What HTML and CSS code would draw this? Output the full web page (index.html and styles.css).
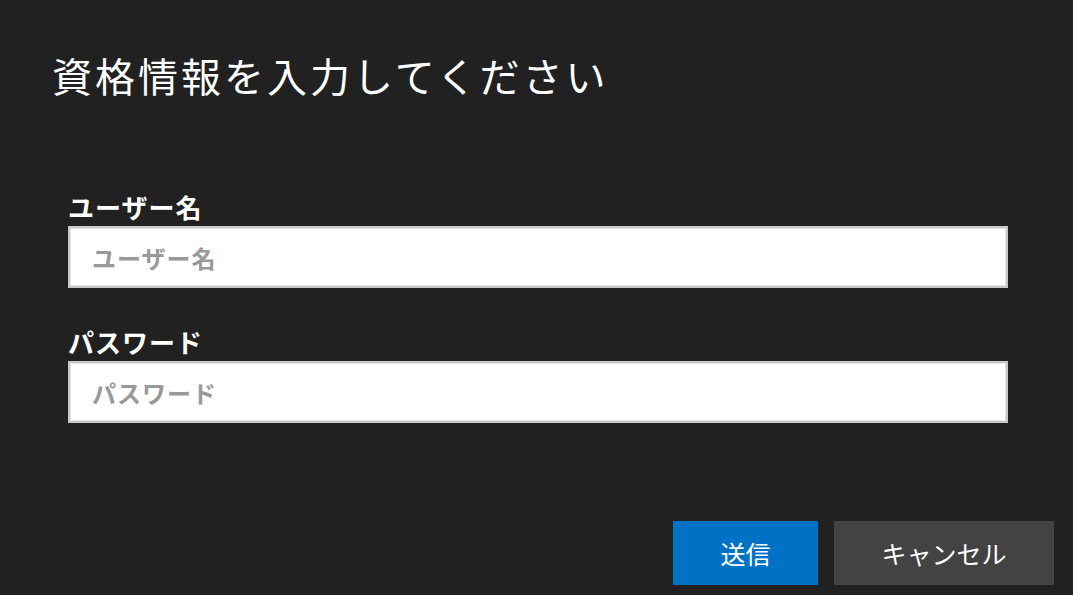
FILE: index.html
```html
<!DOCTYPE html>
<html lang="ja">
<head>
<meta charset="utf-8">
<title>資格情報を入力してください</title>
<link rel="stylesheet" href="styles.css">
</head>
<body>
<div class="dialog">
  <h1 class="title">資格情報を入力してください</h1>
  <form class="form">
    <label class="field">
      <span class="label">ユーザー名</span>
      <input class="input" type="text" placeholder="ユーザー名">
    </label>
    <label class="field field-second">
      <span class="label">パスワード</span>
      <input class="input" type="password" placeholder="パスワード">
    </label>
  </form>
  <div class="actions">
    <button class="btn btn-primary" type="button">送信</button>
    <button class="btn btn-secondary" type="button">キャンセル</button>
  </div>
</div>
</body>
</html>
```
FILE: styles.css
```css
html, body {
  margin: 0;
  padding: 0;
  background: #212121;
  height: 100%;
}
body {
  font-family: "Noto Sans CJK JP", "Noto Sans", sans-serif;
  color: #ffffff;
}
.dialog {
  display: flex;
  flex-direction: column;
  height: 595px;
  box-sizing: border-box;
}
.title {
  margin: 51px 0 0 52px;
  font-size: 40px;
  line-height: 48px;
  font-weight: 400;
  letter-spacing: 3px;
}
.form {
  display: flex;
  flex-direction: column;
  margin: 93px 0 0 68px;
  width: 940px;
}
.field {
  display: flex;
  flex-direction: column;
  gap: 4px;
}
.field-second {
  margin-top: 39px;
}
.label {
  font-size: 26px;
  line-height: 30px;
  font-weight: 700;
  letter-spacing: 1px;
}
.input {
  box-sizing: border-box;
  height: 62px;
  width: 100%;
  margin: 0;
  padding: 0 22px;
  border: 2px solid #c8c8c8;
  box-shadow: inset 0 0 0 1px #e4e4e4;
  background: #ffffff;
  font-family: "Noto Sans CJK JP", "Noto Sans", sans-serif;
  font-size: 24px;
  font-weight: 700;
  letter-spacing: 1px;
  color: #222;
  outline: none;
}
.input::placeholder {
  color: #999999;
  opacity: 1;
}
.actions {
  display: flex;
  justify-content: flex-end;
  gap: 16px;
  margin-top: auto;
  padding: 0 19px 10px 0;
}
.btn {
  height: 64px;
  border: none;
  margin: 0;
  padding: 0;
  font-family: "Noto Sans CJK JP", "Noto Sans", sans-serif;
  font-size: 25px;
  font-weight: 400;
  color: #ffffff;
}
.btn-primary {
  width: 145px;
  background: #0072c6;
}
.btn-secondary {
  width: 220px;
  background: #434343;
}
```
